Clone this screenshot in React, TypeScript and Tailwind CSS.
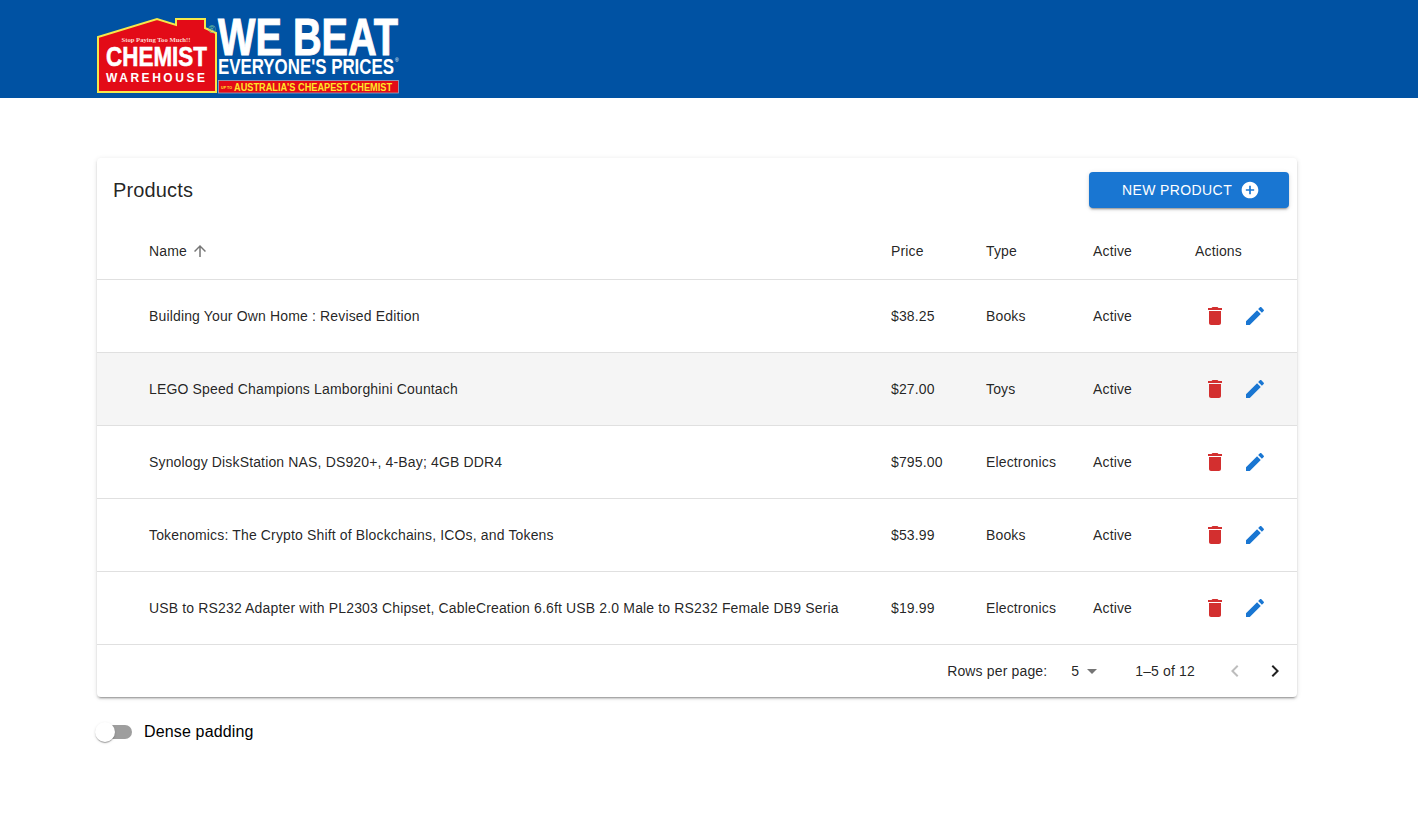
const rows = [
  ["Building Your Own Home : Revised Edition", "$38.25", "Books"],
  ["LEGO Speed Champions Lamborghini Countach", "$27.00", "Toys"],
  ["Synology DiskStation NAS, DS920+, 4-Bay; 4GB DDR4", "$795.00", "Electronics"],
  ["Tokenomics: The Crypto Shift of Blockchains, ICOs, and Tokens", "$53.99", "Books"],
  ["USB to RS232 Adapter with PL2303 Chipset, CableCreation 6.6ft USB 2.0 Male to RS232 Female DB9 Seria", "$19.99", "Electronics"],
];

function Icon({ d, className }: { d: string; className: string }) {
  return (
    <svg viewBox="0 0 24 24" className={className} fill="currentColor" aria-hidden="true">
      <path d={d} />
    </svg>
  );
}

function Logo() {
  return (
    <svg viewBox="97 0 310 98" className="block w-[310px] h-[98px]" style={{ fontFamily: '"Liberation Sans", Arial, sans-serif' }}>
      <polygon points="98,92 98,37 157,19 176,25 176,19 205,19 205,28 216,33 216,92" fill="#e30b17" stroke="#f6e84a" strokeWidth="2" />
      <text x="156" y="42" textAnchor="middle" fontSize="7" fontWeight="700" fill="#ffd9d0" textLength="69" lengthAdjust="spacingAndGlyphs" style={{ fontFamily: '"Liberation Serif", serif' }}>Stop Paying Too Much!!</text>
      <text x="106" y="65.5" fontSize="28" fontWeight="700" fill="#fff" stroke="#fff" strokeWidth="0.6" textLength="101" lengthAdjust="spacingAndGlyphs">CHEMIST</text>
      <text x="106" y="82" fontSize="12" fontWeight="700" fill="#fff" textLength="99" lengthAdjust="spacing">WAREHOUSE</text>
      <text x="212" y="33" textAnchor="middle" fontSize="10" fill="#6fc09a">®</text>
      <text x="218" y="55" fontSize="51" fontWeight="700" fill="#fff" stroke="#fff" strokeWidth="1" textLength="180" lengthAdjust="spacingAndGlyphs">WE BEAT</text>
      <text x="218" y="74" fontSize="22" fontWeight="700" fill="#fff" textLength="176" lengthAdjust="spacingAndGlyphs">EVERYONE'S PRICES</text>
      <text x="395" y="62" fontSize="5" fill="#fff">®</text>
      <rect x="218.5" y="80.5" width="180" height="12.5" fill="#e30b17" stroke="#9fb0c8" strokeWidth="0.75" />
      <text x="234" y="90.7" fontSize="11" fontWeight="700" fill="#ffe629" textLength="158" lengthAdjust="spacingAndGlyphs">AUSTRALIA'S CHEAPEST CHEMIST</text>
      <text x="221" y="89" fontSize="4" fontWeight="700" fill="#ffe629" textLength="11" lengthAdjust="spacingAndGlyphs">UP TO</text>
    </svg>
  );
}

const DEL = "M6 19c0 1.1.9 2 2 2h8c1.1 0 2-.9 2-2V7H6v12zM19 4h-3.5l-1-1h-5l-1 1H5v2h14V4z";
const EDIT = "M3 17.25V21h3.75L17.81 9.94l-3.75-3.75L3 17.25zM20.71 7.04c.39-.39.39-1.02 0-1.41l-2.34-2.34c-.39-.39-1.02-.39-1.41 0l-1.83 1.83 3.75 3.75 1.83-1.83z";

export default function App() {
  return (
    <div className="min-h-[825px] bg-white text-[14px] text-[rgba(0,0,0,0.87)] font-['Liberation_Sans',Arial,sans-serif]">
      <header className="h-[98px] bg-[#0052a3] pl-[97px]">
        <Logo />
      </header>
      <main className="w-[1200px] ml-[97px] mt-[60px]">
        <section className="bg-white rounded-[4px] shadow-[0_3px_1px_-2px_rgba(0,0,0,0.2),0_2px_2px_0_rgba(0,0,0,0.14),0_1px_5px_0_rgba(0,0,0,0.12)]">
          <div className="flex items-center justify-between h-[64px] pl-4 pr-2">
            <h1 className="text-[20px] leading-[32px] tracking-[0.0075em] font-normal">Products</h1>
            <button className="flex items-center justify-center w-[200px] h-9 pl-1 rounded-[4px] bg-[#1976d2] text-white text-[14px] font-normal tracking-[0.02857em] uppercase shadow-[0_3px_1px_-2px_rgba(0,0,0,0.2),0_2px_2px_0_rgba(0,0,0,0.14),0_1px_5px_0_rgba(0,0,0,0.12)]">
              NEW PRODUCT
              <Icon className="w-5 h-5 ml-2" d="M12 2C6.48 2 2 6.48 2 12s4.48 10 10 10 10-4.48 10-10S17.52 2 12 2zm5 11h-4v4h-2v-4H7v-2h4V7h2v4h4v2z" />
            </button>
          </div>
          <table className="w-full table-fixed border-collapse tracking-[0.01071em]">
            <colgroup>
              <col className="w-[778px]" />
              <col className="w-[95px]" />
              <col className="w-[107px]" />
              <col className="w-[102px]" />
              <col className="w-[118px]" />
            </colgroup>
            <thead>
              <tr className="h-[57px] border-b border-[#e0e0e0]">
                <th className="pl-[52px] pt-[2px] text-left font-normal">
                  <span className="inline-flex items-center">
                    Name
                    <Icon className="w-[18px] h-[18px] ml-1 text-[#757575]" d="M4 12l1.41 1.41L11 7.83V20h2V7.83l5.58 5.59L20 12l-8-8-8 8z" />
                  </span>
                </th>
                <th className="pl-4 pt-[2px] text-left font-normal">Price</th>
                <th className="pl-4 pt-[2px] text-left font-normal">Type</th>
                <th className="pl-4 pt-[2px] text-left font-normal">Active</th>
                <th className="pl-4 pt-[2px] text-left font-normal">Actions</th>
              </tr>
            </thead>
            <tbody>
              {rows.map((r, i) => (
                <tr key={r[0]} className={`h-[73px] border-b border-[#e0e0e0] ${i === 1 ? "bg-[#f5f5f5]" : ""}`}>
                  <td className="pl-[52px] pt-px whitespace-nowrap">{r[0]}</td>
                  <td className="pl-4 pt-px">{r[1]}</td>
                  <td className="pl-4 pt-px">{r[2]}</td>
                  <td className="pl-4 pt-px">Active</td>
                  <td className="pl-4">
                    <div className="flex items-center gap-4 pl-2">
                      <Icon className="w-6 h-6 text-[#d32f2f]" d={DEL} />
                      <Icon className="w-6 h-6 text-[#1976d2]" d={EDIT} />
                    </div>
                  </td>
                </tr>
              ))}
            </tbody>
          </table>
          <div className="flex items-center justify-end h-[52px] pr-[2px] pt-px tracking-[0.01071em]">
            <span>Rows per page:</span>
            <span className="ml-6">5</span>
            <Icon className="w-6 h-6 text-[#757575] ml-px" d="M7 10l5 5 5-5z" />
            <span className="ml-[31px]">1–5 of 12</span>
            <div className="flex ml-5">
              <span className="w-10 h-10 flex items-center justify-center text-[#bdbdbd]">
                <Icon className="w-6 h-6" d="M15.41 7.41L14 6l-6 6 6 6 1.41-1.41L10.83 12z" />
              </span>
              <span className="w-10 h-10 flex items-center justify-center text-[#212121]">
                <Icon className="w-6 h-6" d="M10 6L8.59 7.41 13.17 12l-4.58 4.59L10 18l6-6z" />
              </span>
            </div>
          </div>
        </section>
        <label className="flex items-center h-[38px] mt-4 text-[16px] text-black tracking-[0.00938em]">
          <span className="relative block w-[35px] h-[14px] rounded-full bg-[#9e9e9e]">
            <span className="absolute -left-[2px] -top-[3px] w-5 h-5 rounded-full bg-white shadow-[0_2px_1px_-1px_rgba(0,0,0,0.2),0_1px_1px_0_rgba(0,0,0,0.14),0_1px_3px_0_rgba(0,0,0,0.12)]" />
          </span>
          <span className="ml-3">Dense padding</span>
        </label>
      </main>
    </div>
  );
}
